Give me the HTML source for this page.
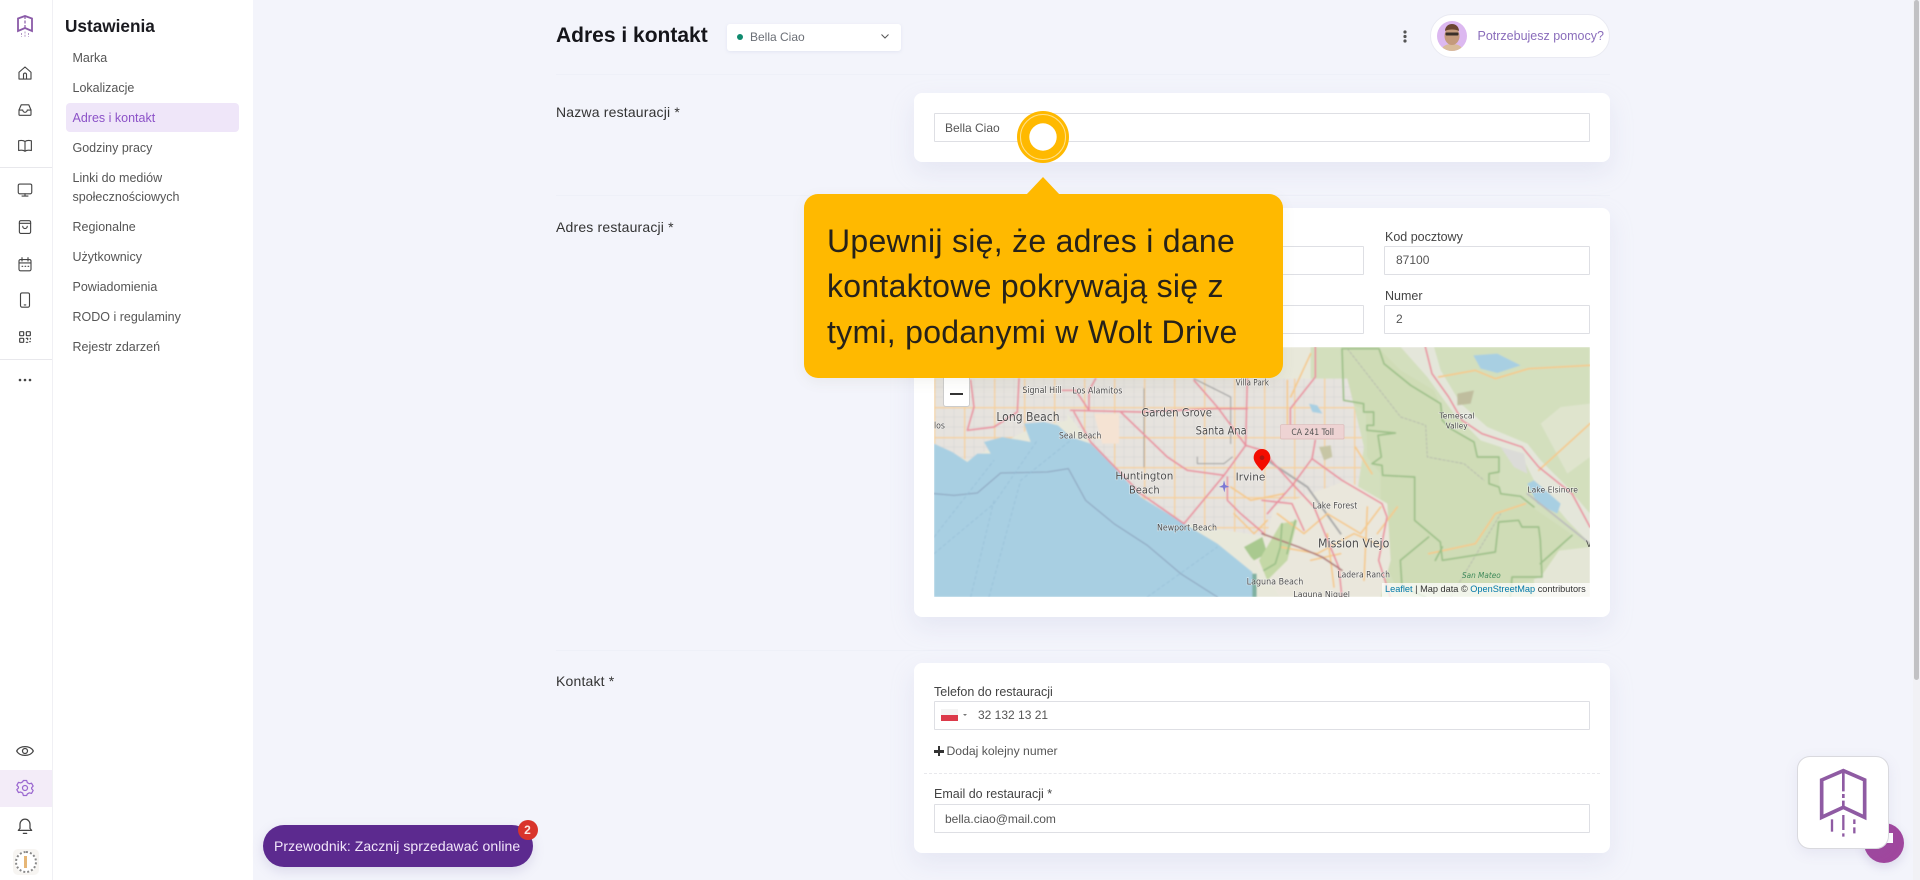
<!DOCTYPE html>
<html lang="pl"><head><meta charset="utf-8"><title>Adres i kontakt</title>
<style>
*{box-sizing:border-box}
html,body{margin:0;padding:0;width:1920px;height:880px;overflow:hidden;background:#f3f4fb;font-family:"Liberation Sans","DejaVu Sans",sans-serif;color:#333}
.a{position:absolute}
.t{position:absolute;white-space:nowrap;line-height:20px;height:20px}
.m{font-size:12.500px;color:#555;left:72.500px}
.card{position:absolute;background:#fff;border-radius:8px;box-shadow:0 10px 24px rgba(180,188,220,.22)}
.inp{position:absolute;background:#fff;border:1px solid #dedfe4;border-radius:1px}
.lab{font-size:12.500px;color:#444}
.val{font-size:12px;color:#555}
.sec{font-size:14px;color:#333;letter-spacing:.18px;left:556px}
.hr{position:absolute;height:1px;background:#eef0f8;left:556px;width:1054px}
svg{position:absolute;overflow:visible}
.ic{fill:none;stroke:#444;stroke-width:1.5;stroke-linecap:round;stroke-linejoin:round}
</style></head><body>

<!-- rail -->
<div class="a" style="left:0;top:0;width:53px;height:880px;background:#fff;border-right:1px solid #f0f0f4"></div>
<div class="a" style="left:53px;top:0;width:200px;height:880px;background:#fff"></div>
<div class="a" style="left:0;top:167px;width:52px;height:1px;background:#e8e8ec"></div>
<div class="a" style="left:0;top:359px;width:52px;height:1px;background:#e8e8ec"></div>
<div class="a" style="left:0;top:770px;width:52px;height:37px;background:#f3ecf8"></div>

<svg style="left:13px;top:14px" width="24" height="26" viewBox="0 0 24 26" fill="none" stroke="#8a5aa8"><path d="M5 4.500 12 2l7 2.500V17l-7-3-7 3z" stroke-width="1.800"/><path d="M12 2v12" stroke-width="1.200" stroke-dasharray="3 1.500"/><path d="M8.500 19v4M12 17.500v6M15.500 19v4" stroke-width="1" stroke="#b49ac6" stroke-dasharray="2 1.200"/></svg>

<svg class="ic" style="left:16px;top:64px" width="18" height="18" viewBox="0 0 24 24"><path d="M4 11 12 4l8 7v9H4zM10 20v-6a2 2 0 0 1 4 0v6"/></svg>
<svg class="ic" style="left:16px;top:101px" width="18" height="18" viewBox="0 0 24 24"><path d="M4 12 7 5h10l3 7v6a1 1 0 0 1-1 1H5a1 1 0 0 1-1-1zM4 12h5a3 3 0 0 0 6 0h5"/></svg>
<svg class="ic" style="left:16px;top:137px" width="18" height="18" viewBox="0 0 24 24"><path d="M12 6C10 4.500 6 4.500 3.500 5v13c2.500-.5 6.500-.5 8.500 1 2-1.500 6-1.500 8.500-1V5C18 4.500 14 4.500 12 6zM12 6v13"/></svg>
<svg class="ic" style="left:16px;top:181px" width="18" height="18" viewBox="0 0 24 24"><rect x="3" y="4" width="18" height="13" rx="2"/><path d="M12 17v3M8 20h8"/></svg>
<svg class="ic" style="left:16px;top:218px" width="18" height="18" viewBox="0 0 24 24"><rect x="4.500" y="3.500" width="15" height="17" rx="2"/><path d="M4.500 7h15M9 11a3 3 0 0 0 6 0"/></svg>
<svg class="ic" style="left:16px;top:255px" width="18" height="18" viewBox="0 0 24 24"><rect x="4" y="6" width="16" height="15" rx="2"/><path d="M8 3.500V8M16 3.500V8M4 10.500h16M8 15h1M12 15h1M16 15h1" /></svg>
<svg class="ic" style="left:16px;top:291px" width="18" height="18" viewBox="0 0 24 24"><rect x="6" y="2.500" width="12" height="19" rx="2"/><path d="M11 18.500h2"/></svg>
<svg class="ic" style="left:17px;top:329px;stroke-width:1.800" width="16" height="16" viewBox="0 0 24 24"><rect x="4" y="4" width="6" height="6" rx="1"/><rect x="14" y="4" width="6" height="6" rx="1"/><rect x="4" y="14" width="6" height="6" rx="1"/><path d="M14 14h2v2M20 14v1M14 20h2M19 19h1" /></svg>
<svg style="left:18px;top:378px" width="14" height="4" viewBox="0 0 14 4" fill="#444"><circle cx="2" cy="2" r="1.300"/><circle cx="7" cy="2" r="1.300"/><circle cx="12" cy="2" r="1.300"/></svg>

<svg class="ic" style="left:15px;top:741px" width="20" height="20" viewBox="0 0 24 24"><path d="M2 12c3.500-7 16.500-7 20 0-3.500 7-16.500 7-20 0z"/><circle cx="12" cy="12" r="3"/></svg>
<svg class="ic" style="left:15px;top:778px;stroke:#9a67d0" width="20" height="20" viewBox="0 0 24 24"><path d="M10 3h4l.8 2.600 2.400 1.300 2.600-.7 2 3.500-1.900 2 .1 1.300 1.800 2-2 3.500-2.600-.7-2.400 1.300L14 21h-4l-.8-2.900-2.400-1.300-2.600.7-2-3.500 1.900-2v-1.300l-1.900-2 2-3.500 2.600.7 2.400-1.300z"/><circle cx="12" cy="12" r="3"/></svg>
<svg class="ic" style="left:15px;top:815px" width="20" height="20" viewBox="0 0 24 24"><path d="M6 16v-5a6 6 0 0 1 12 0v5l2 2.500H4zM10 22h4"/></svg>
<div class="a" style="left:12.500px;top:849px;width:26px;height:26px;border-radius:5px;background:#f7f5f2"></div>
<div class="a" style="left:14.500px;top:851px;width:22px;height:22px;border-radius:50%;background:#fff;border:2px dotted #888"></div>
<div class="a" style="left:23.500px;top:856px;width:3px;height:12px;background:#e6b676"></div>

<!-- sub menu -->
<div class="t" style="left:65px;top:16px;font-size:17.200px;font-weight:700;color:#1a1a1f">Ustawienia</div>
<div class="a" style="left:66px;top:103px;width:173px;height:29px;background:#efe6f9;border-radius:4px"></div>
<div class="t m" style="top:48px">Marka</div>
<div class="t m" style="top:78px">Lokalizacje</div>
<div class="t m" style="top:108px;color:#8c52c8">Adres i kontakt</div>
<div class="t m" style="top:138px">Godziny pracy</div>
<div class="t m" style="top:168px">Linki do mediów</div>
<div class="t m" style="top:187px">społecznościowych</div>
<div class="t m" style="top:217px">Regionalne</div>
<div class="t m" style="top:247px">Użytkownicy</div>
<div class="t m" style="top:277px">Powiadomienia</div>
<div class="t m" style="top:307px">RODO i regulaminy</div>
<div class="t m" style="top:337px">Rejestr zdarzeń</div>

<!-- header -->
<div class="t" style="left:556px;top:26px;font-size:21px;font-weight:700;color:#15151a">Adres i kontakt</div>
<div class="a" style="left:727px;top:24px;width:174px;height:27px;background:#fff;border-radius:3px;box-shadow:0 1px 3px rgba(180,188,220,.25)"></div>
<div class="a" style="left:736.500px;top:34px;width:6px;height:6px;border-radius:50%;background:#0f8a6e"></div>
<div class="t val" style="left:750px;top:27px;color:#6b6f76">Bella Ciao</div>
<svg style="left:881px;top:34px" width="8" height="5" viewBox="0 0 8 5" fill="none" stroke="#555" stroke-width="1"><path d="M.5.500 4 4 7.500.500"/></svg>
<svg style="left:1403px;top:30px" width="4" height="13" viewBox="0 0 4 13" fill="#555"><circle cx="2" cy="2" r="1.600"/><circle cx="2" cy="6.500" r="1.600"/><circle cx="2" cy="11" r="1.600"/></svg>
<div class="a" style="left:1430px;top:14px;width:180px;height:44px;border-radius:22px;background:#fff;border:1px solid #e9eaf2"></div>
<svg style="left:1437px;top:21px" width="30" height="30" viewBox="0 0 30 30"><defs><clipPath id="c"><circle cx="15" cy="15" r="15"/></clipPath></defs><g clip-path="url(#c)"><rect width="30" height="30" fill="#dcb8f0"/><path d="M4 32c0-7 5-9 11-9s11 2 11 9z" fill="#d9bb9a"/><ellipse cx="15" cy="15" rx="7.500" ry="9" fill="#c49a7c"/><path d="M8 10c0-4 3-7 7-7s7 3 7 7c-3-2-11-2-14 0z" fill="#6b4632"/><rect x="8.500" y="11.500" width="13" height="3" rx="1" fill="#3a302a"/></g></svg>
<div class="t" style="left:1477.500px;top:26px;font-size:12.500px;color:#8a6dbb">Potrzebujesz pomocy?</div>

<div class="hr" style="top:74px"></div>
<div class="hr" style="top:195px"></div>
<div class="hr" style="top:650px"></div>

<div class="t sec" style="top:102px">Nazwa restauracji *</div>
<div class="t sec" style="top:217px">Adres restauracji *</div>
<div class="t sec" style="top:671px">Kontakt *</div>

<!-- card 1 -->
<div class="card" style="left:914px;top:93px;width:696px;height:69px"></div>
<div class="inp" style="left:934px;top:113px;width:656px;height:29px"></div>
<div class="t val" style="left:945px;top:118px">Bella Ciao</div>

<!-- card 2 -->
<div class="card" style="left:914px;top:208px;width:696px;height:409px"></div>
<div class="t lab" style="left:1385px;top:227px">Kod pocztowy</div>
<div class="inp" style="left:934px;top:246px;width:430px;height:29px"></div>
<div class="inp" style="left:1384px;top:246px;width:206px;height:29px"></div>
<div class="t val" style="left:1396px;top:250px">87100</div>
<div class="t lab" style="left:1385px;top:286px">Numer</div>
<div class="inp" style="left:934px;top:305px;width:430px;height:29px"></div>
<div class="inp" style="left:1384px;top:305px;width:206px;height:29px"></div>
<div class="t val" style="left:1396px;top:309px">2</div>

<!-- map -->
<svg style="left:934px;top:347px;overflow:hidden" width="656" height="250" viewBox="0 0 1968 750">
<defs>
<pattern id="g" width="90" height="90" patternUnits="userSpaceOnUse"><rect width="90" height="90" fill="#e6e3de"/><path d="M0 30h90M0 60h90M30 0v90M60 0v90" stroke="#d9d8d6" stroke-width="2"/><path d="M0 2h90M2 0v90" stroke="#f6d09a" stroke-width="4"/></pattern>
<filter id="b"><feGaussianBlur stdDeviation="2"/></filter>
</defs>
<g filter="url(#b)" fill="none" stroke-linecap="round" stroke-linejoin="round">
<rect width="1968" height="750" fill="#e8e8da"/>
<!-- green background right -->
<path d="M1130 0H1968V750H1130z" fill="#d3dfbd"/>
<path d="M1400 0 1480 90 1560 200 1640 280 1760 320 1800 400 1900 520 1968 590V500L1900 420 1820 340 1780 290 1660 240 1580 170 1520 70 1500 0z" fill="#e4e6da"/>
<path d="M1820 230 1880 180 1968 170V330L1900 380z" fill="#dfe4cd"/>
<path d="M1800 620 1968 600V750H1800z" fill="#e4e6d6"/>
<path d="M1224 5H1335L1400 70 1500 130 1525 190 1530 240 1620 285 1630 330 1695 330 1695 440 1750 450 1910 560 1820 690 1640 750H1400L1350 640 1340 510 1340 380 1300 330 1295 190 1229 160z" fill="#cfdcb6"/>
<!-- city grid -->
<path d="M400 95H1240L1290 300 1260 500 1140 560 1000 570 750 530 620 450 540 360 470 290 400 200z" fill="url(#g)"/>
<path d="M0 95H400V220L300 240 200 290 100 340 0 290z" fill="url(#g)"/>
<path d="M1020 480 1240 400 1360 470 1370 640 1340 750H1040L960 640 1000 560z" fill="#eae7dc"/>
<path d="M480 200H555V290H505z" fill="#f5e3d3"/>
<!-- south green -->
<path d="M930 600 985 570 1000 620 960 640 950 630z" fill="#a9c98f"/>
<path d="M1040 530 1090 520 1060 640 1000 700 975 640z" fill="#c4d8a6"/>
<!-- water -->
<path d="M0 290 55 315 100 345 130 320 170 320 150 285 205 270 290 285 270 230 330 225 372 235 410 270 470 290 540 360 620 450 750 530 850 590 955 675 960 750H0z" fill="#a8cfe2"/>
<path d="M955 680H968V750H955z" fill="#7fb0a0"/>
<path d="M1618 25 1690 20 1760 55 1690 78 1640 65z" fill="#a8cfe2"/>
<path d="M1780 410 1800 400 1880 470 1870 500 1810 470z" fill="#a8cfe2"/>
<path d="M1125 170 1150 175 1165 200 1135 195z" fill="#a8cfe2"/>
<path d="M1570 140 1620 130 1610 170 1570 175z" fill="#bfbd9e"/>
<path d="M1155 300 1190 295 1195 330 1170 340z" fill="#c7c6a5"/>
<!-- water lines -->
<path d="M0 440 60 445 130 438 200 378 340 375 403 365 455 460 540 530 640 595 740 680 850 750" stroke="#8aa0bb" stroke-width="3"/>
<path d="M0 620 180 470 310 280M110 750 180 460M165 750 260 400 410 280M640 750 850 600M0 570 180 340" stroke="#93bcd6" stroke-width="2" stroke-dasharray="10 8"/>
<!-- grey -->
<path d="M630 125V360M790 330V350H870L895 330M780 95 890 150V290" stroke="#999" stroke-width="3"/>
<path d="M1000 340 1120 420 1220 560" stroke="#aaa" stroke-width="6"/>
<path d="M1240 5 1400 210 1475 235 1480 330 1590 350 1650 400M1550 750 1700 500" stroke="#aaa" stroke-width="2" stroke-dasharray="8 5"/>
<path d="M1780 440 1968 590" stroke="#bbb" stroke-width="5"/>
<!-- orange roads -->
<g stroke="#f5c98a" stroke-width="5">
<path d="M1514 90 1624 70 1684 95 1784 65 1968 55"/>
<path d="M1264 300 1314 380M1484 620 1624 590 1684 500 1774 470M1814 370 1968 230"/>
<path d="M1030 500 1110 560 1180 500 1280 560 1340 480M1040 600 1150 620 1260 560 1350 600M1130 640 1220 620M1180 560 1200 720M1300 480 1290 700M1390 480 1330 560"/>
<path d="M900 500 960 560 1000 520M890 420 950 460 1050 440"/>
<path d="M1060 100V250M1130 20 1070 150"/>
</g>
<!-- pink -->
<g stroke="#e9909f" stroke-width="5">
<path d="M100 250 120 180 110 100M100 250 180 240 250 195 255 95"/>
<path d="M410 190 620 195 840 185 940 185M560 195 700 330 760 370 870 385"/>
<path d="M465 190 425 130 385 130M465 190 465 130 485 95"/>
<path d="M940 95 935 295 870 385 750 530M420 195 470 285 620 440 750 530"/>
<path d="M780 100 850 180 935 295 984 310 1079 415 1140 480 1214 660 1224 750"/>
<path d="M1144 0V90L1069 185V240M1144 280 1134 335 1079 410 1000 500M1134 335 1224 400 1344 470 1359 510 1334 640 1369 750"/>
<path d="M1474 0 1494 80 1544 150 1584 220 1644 260 1764 300 1814 360 1914 440 1968 540"/>
<path d="M984 460 1074 470 1110 550M880 390 880 460 920 500 990 560"/>
</g>
<path d="M984 560 1094 600 1164 630 1224 670" stroke="#b07878" stroke-width="5"/>
<!-- park boundary -->
<g stroke="#9cc088" stroke-width="5">
<path d="M1224 5H1335L1350 50 1430 115 1520 170 1525 220 1550 245 1620 285 1630 330 1695 330 1695 375 1665 380 1665 410 1695 420 1700 440 1760 448 1800 480"/>
<path d="M1224 5 1229 160 1289 170 1289 195 1319 195 1319 235 1299 235 1299 250 1384 258 1332 265 1342 330 1314 350 1344 355 1346 385 1442 390 1442 520 1519 585 1525 640 1684 615 1694 525 1754 520 1764 540 1814 540 1819 580 1824 690 1734 690 1729 750"/>
<path d="M1399 640 1484 570M1399 640 1404 720 1474 750M1819 650 1914 565M1504 640 1525 600"/>
<path d="M1044 530 1039 600 1024 650 990 670M1084 520 1059 620"/>
</g>
<path d="M1700 300 1770 320 1780 380 1740 360z" fill="#dbdbd8"/>
</g>
<!-- map labels -->
<g font-family="'DejaVu Sans',sans-serif" fill="#4d4d4d" style="paint-order:stroke" stroke="#fff" stroke-opacity=".55" stroke-width="4">
<text x="187" y="222" font-size="36" textLength="190" lengthAdjust="spacingAndGlyphs">Long Beach</text>
<text x="265" y="138" font-size="26" textLength="118" lengthAdjust="spacingAndGlyphs">Signal Hill</text>
<text x="415" y="140" font-size="26" textLength="150" lengthAdjust="spacingAndGlyphs">Los Alamitos</text>
<text x="622" y="208" font-size="34" textLength="212" lengthAdjust="spacingAndGlyphs">Garden Grove</text>
<text x="785" y="263" font-size="34" textLength="153" lengthAdjust="spacingAndGlyphs">Santa Ana</text>
<text x="375" y="275" font-size="26" textLength="127" lengthAdjust="spacingAndGlyphs">Seal Beach</text>
<text x="544" y="398" font-size="33" textLength="174" lengthAdjust="spacingAndGlyphs">Huntington</text>
<text x="585" y="439" font-size="33" textLength="92" lengthAdjust="spacingAndGlyphs">Beach</text>
<text x="669" y="550" font-size="26" textLength="180" lengthAdjust="spacingAndGlyphs">Newport Beach</text>
<text x="905" y="400" font-size="33" textLength="89" lengthAdjust="spacingAndGlyphs">Irvine</text>
<text x="905" y="116" font-size="26" textLength="100" lengthAdjust="spacingAndGlyphs">Villa Park</text>
<text x="0" y="245" font-size="26" textLength="33" lengthAdjust="spacingAndGlyphs">los</text>
<text x="1136" y="484" font-size="26" textLength="134" lengthAdjust="spacingAndGlyphs">Lake Forest</text>
<text x="1152" y="601" font-size="36" textLength="214" lengthAdjust="spacingAndGlyphs">Mission Viejo</text>
<text x="1210" y="692" font-size="26" textLength="158" lengthAdjust="spacingAndGlyphs">Ladera Ranch</text>
<text x="938" y="712" font-size="26" textLength="170" lengthAdjust="spacingAndGlyphs">Laguna Beach</text>
<text x="1078" y="750" font-size="24" textLength="170" lengthAdjust="spacingAndGlyphs">Laguna Niguel</text>
<text x="1516" y="214" font-size="25" textLength="106" lengthAdjust="spacingAndGlyphs">Temescal</text>
<text x="1535" y="244" font-size="25" textLength="66" lengthAdjust="spacingAndGlyphs">Valley</text>
<text x="1780" y="437" font-size="25" textLength="152" lengthAdjust="spacingAndGlyphs">Lake Elsinore</text>
<text x="1584" y="693" font-size="24" font-style="italic" fill="#3f8a5a" stroke="none" textLength="116" lengthAdjust="spacingAndGlyphs">San Mateo</text>
<text x="1956" y="600" font-size="26" stroke="none">V</text>
</g>
<rect x="1040" y="233" width="190" height="43" rx="3" fill="#eed3d3" stroke="#dbb7b7" stroke-width="2"/>
<text x="1072" y="264" font-family="'DejaVu Sans',sans-serif" font-size="26" fill="#555" textLength="128" lengthAdjust="spacingAndGlyphs">CA 241 Toll</text>
<path d="M870 400 874 414 886 420 874 422 871 436 867 422 855 420 867 414z" fill="#7b78d4"/>
<!-- marker -->
<path d="M984 306c14 0 25 11 25 26 0 15-18 32-25 40-7-8-25-25-25-40 0-15 11-26 25-26z" fill="#f30d00"/>
<circle cx="984" cy="332" r="7" fill="#b01510"/>
</svg>
<div class="a" style="left:943px;top:378px;width:27px;height:29px;background:#fff;border:1px solid #ccc;border-top:none;border-radius:0 0 3px 3px"></div>
<div class="a" style="left:950px;top:393px;width:13px;height:2px;background:#333"></div>
<div class="a" style="left:1382px;top:583px;width:208px;height:14px;background:rgba(255,255,255,.72)"></div>
<div class="t" style="left:1385px;top:579px;font-size:9.200px;color:#333"><span style="color:#0078a8">Leaflet</span> | Map data © <span style="color:#0078a8">OpenStreetMap</span> contributors</div>

<!-- card 3 -->
<div class="card" style="left:914px;top:663px;width:696px;height:190px"></div>
<div class="t lab" style="left:934px;top:682px">Telefon do restauracji</div>
<div class="inp" style="left:934px;top:701px;width:656px;height:29px"></div>
<div class="a" style="left:941px;top:709px;width:17px;height:6px;background:#f4f4f4"></div>
<div class="a" style="left:941px;top:715px;width:17px;height:6px;background:#dc3a4a"></div>
<div class="a" style="left:963px;top:714px;border:2.500px solid transparent;border-top:2.500px solid #777"></div>
<div class="t val" style="left:978px;top:705px">32 132 13 21</div>
<div class="a" style="left:934px;top:750px;width:10px;height:2.500px;background:#333"></div>
<div class="a" style="left:937.800px;top:746px;width:2.500px;height:10px;background:#333"></div>
<div class="t val" style="left:946.500px;top:741px;font-size:12.200px">Dodaj kolejny numer</div>
<div class="a" style="left:924px;top:773px;width:676px;border-top:1px dashed #e8e8ec"></div>
<div class="t lab" style="left:934px;top:784px">Email do restauracji *</div>
<div class="inp" style="left:934px;top:804px;width:656px;height:29px"></div>
<div class="t val" style="left:945px;top:809px">bella.ciao@mail.com</div>

<!-- guide pill -->
<div class="a" style="left:262.500px;top:825px;width:270px;height:42px;border-radius:21px;background:#5c2a8f;box-shadow:0 4px 12px rgba(120,110,170,.2)"></div>
<div class="t" style="left:274px;top:836px;font-size:14px;color:#f2e6fa;letter-spacing:.05px">Przewodnik: Zacznij sprzedawać online</div>
<div class="a" style="left:517.500px;top:820px;width:20px;height:20px;border-radius:50%;background:#d9342b;color:#fbe9e4;font-size:12px;font-weight:700;text-align:center;line-height:20px">2</div>

<!-- tooltip -->
<div class="a" style="left:804px;top:194px;width:479px;height:184px;background:#ffb900;border-radius:14px;box-shadow:0 4px 14px rgba(120,110,80,.08)"></div>
<svg style="left:1026px;top:177px" width="34" height="18" viewBox="0 0 34 18"><path d="M0 18 17 0l17 18z" fill="#ffb900"/></svg>
<div class="a" style="left:827px;top:218.500px;font-size:32px;line-height:45.500px;color:#26221a;white-space:nowrap;letter-spacing:.28px">Upewnij się, że adres i dane<br>kontaktowe pokrywają się z<br>tymi, podanymi w Wolt Drive</div>

<!-- target -->
<svg style="left:1016px;top:110px" width="54" height="54" viewBox="0 0 54 54"><circle cx="27" cy="27" r="26" fill="#ffb900"/><circle cx="27" cy="27" r="22.500" fill="none" stroke="#ffe08a" stroke-width="1"/><circle cx="27" cy="27" r="13.700" fill="#fff"/></svg>

<!-- widget -->
<div class="a" style="left:1864px;top:823px;width:40px;height:40px;border-radius:50%;background:#a0479e;box-shadow:0 4px 10px rgba(120,110,170,.2)"></div>
<div class="a" style="left:1880px;top:833px;width:13px;height:10px;background:#fff"></div>
<div class="a" style="left:1797px;top:756px;width:92px;height:93px;background:#fff;border:1px solid #d9d9de;border-radius:13px;box-shadow:0 4px 14px rgba(120,110,170,.1)"></div>
<svg style="left:1760px;top:740px" width="160" height="140" viewBox="0 0 480 420" fill="none" stroke="#8f5ba3"><path d="M185 120 250 92 314 120V232L250 202 185 232z" stroke-width="11"/><path d="M250 92V205" stroke-width="8" stroke-dasharray="62 8 12 8 30"/><path d="M216 238V275" stroke-width="7"/><path d="M250 225V270M250 280V290" stroke-width="7"/><path d="M283 238V252M283 262V280" stroke-width="7"/></svg>

<!-- scrollbar -->
<div class="a" style="left:1913px;top:0;width:7px;height:880px;background:#f1f1f5"></div>
<div class="a" style="left:1914px;top:0;width:5px;height:680px;background:#c1c1c4;border-radius:3px"></div>
</body></html>
